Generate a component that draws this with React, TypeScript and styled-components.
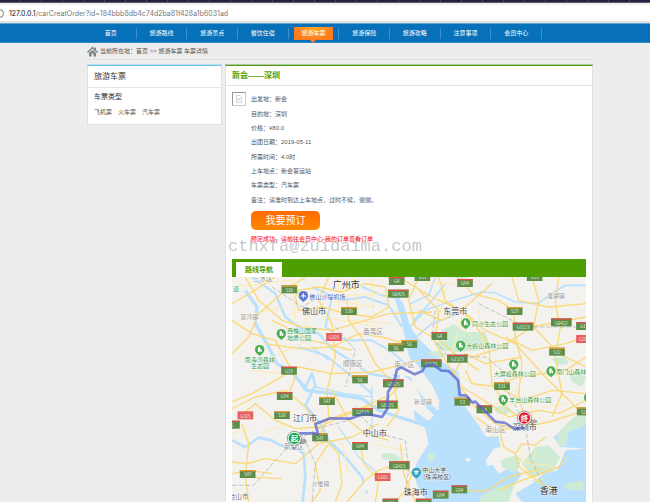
import React from "react";
import styled, { createGlobalStyle } from "styled-components";

const sans = `"Liberation Sans", "Noto Sans CJK SC", sans-serif`;

const GlobalStyle = createGlobalStyle`
  * { box-sizing: border-box; }
  html { background: #ededed; overflow: hidden; }
  body { margin: 0; font: 6px/14px ${sans}; color: #555; }
  a { color: inherit; text-decoration: none; }
  h1, h2, h3, p, ul { margin: 0; padding: 0; }
  ul { list-style: none; }
`;

/* Browser chrome */
const TabStrip = styled.div`
  height: 3px;
  background: repeating-linear-gradient(90deg, #23213f 0 20px, #4a4963 20px 21px);
  border-bottom: 1px solid #5c5b70;
`;
const AddressBar = styled.div`
  display: flex;
  align-items: center;
  height: 20px;
  padding-top: 1px;
  background: #fff;
  border-bottom: 2px solid #e4e4e4;
  border-top: 2px solid #f0f0f0;
`;
const InfoIcon = styled.svg`
  width: 9px;
  height: 9px;
  margin-left: -5px;
  flex: none;
`;
const AddressInput = styled.input`
  flex: 1;
  min-width: 0;
  padding: 0;
  border: 0;
  outline: 0;
  background: none;
  font: 7px/14px Inter, sans-serif;
  color: #777;
`;
const AddressHost = styled.label`
  margin-left: 5px;
  font: 7px/14px Inter, sans-serif;
  color: #111;
`;

/* Navigation */
const Nav = styled.nav`
  height: 20px;
  padding: 0 108px 0 86px;
  background: #0670b8;
  border-top: 1px solid #5fa3d0;
  border-bottom: 1px solid #2c8acb;
`;
const NavList = styled.ul`
  display: grid;
  grid-template-columns: repeat(9, 1fr);
  align-items: center;
  height: 18px;
`;
const NavItem = styled.li`
  display: flex;
  justify-content: center;
  border-right: 1px solid #3c90cb;
  line-height: 11px;
`;
const NavLink = styled.a<{ $active?: boolean }>`
  position: relative;
  padding: 0 7px;
  line-height: 13px;
  margin: -1px 0;
  color: #fff;
  white-space: nowrap;
  background: ${(p) => (p.$active ? "radial-gradient(ellipse at 50% 0, #ffab1c, #ff7a1f 75%)" : "none")};
  &::after {
    content: "";
    display: ${(p) => (p.$active ? "block" : "none")};
    position: absolute;
    left: 50%;
    top: 100%;
    margin-left: -3px;
    border: 3px solid transparent;
    border-top-color: #ff7a1f;
    border-bottom: 0;
  }
`;

/* Page */
const Page = styled.main`
  margin: 0 57px 0 87px;
`;
const Breadcrumb = styled.div`
  display: flex;
  align-items: center;
  gap: 2px;
  height: 17px;
  margin-bottom: 5px;
  border-bottom: 1px solid #e2e2e2;
`;
const HomeIcon = styled.svg`
  width: 11px;
  height: 11px;
`;
const Columns = styled.div`
  display: flex;
  align-items: flex-start;
  gap: 3px;
`;
const Panel = styled.section<{ $accent: string }>`
  background: #fff;
  border: 1px solid #e0e0e0;
  border-top: 1px solid ${(p) => p.$accent};
  box-shadow: 0 -1px 0 ${(p) => p.$accent}66;
`;
const Sidebar = styled(Panel)`
  flex: 0 0 135px;
  min-height: 60px;
`;
const Content = styled(Panel)`
  flex: 1;
  min-width: 0;
  position: relative;
`;
const SideTitle = styled.h2`
  padding: 0 6px;
  font-size: 8px;
  font-weight: 400;
  line-height: 21px;
  color: #333;
  border-bottom: 1px solid #e4e4e4;
`;
const SideHeading = styled.h3`
  padding: 2px 6px 0;
  font-size: 7px;
  font-weight: 400;
  line-height: 14px;
  color: #333;
`;
const TypeList = styled.ul`
  display: flex;
  gap: 6px;
  padding: 1px 6px 0;
`;
const Title = styled.h1`
  padding: 0 6px;
  font-size: 8px;
  line-height: 19px;
  color: #4f9e05;
  border-bottom: 1px solid #e4e4e4;
`;
const Detail = styled.div`
  display: flex;
  align-items: flex-start;
  gap: 5px;
  padding: 6px 6px 0;
`;
const MissingImage = styled.span`
  display: flex;
  align-items: center;
  justify-content: center;
  width: 14px;
  height: 14px;
  border: 1px solid;
  border-color: #999 #ccc #ccc #999;
`;
const Facts = styled.ul`
  display: grid;
  grid-auto-rows: 1fr;
  align-items: center;
  height: 115px;
`;
const BookButton = styled.button`
  display: block;
  width: 69px;
  height: 19px;
  margin: 4px 0 2px;
  padding: 0;
  border: 0;
  border-radius: 5px;
  background: linear-gradient(#ff6a00, #ff8a00);
  color: #fff;
  font: 10px/19px ${sans};
`;
const Notice = styled.p`
  color: #f00;
  line-height: 14px;
`;
const Watermark = styled.span`
  position: absolute;
  left: 2px;
  top: 171px;
  font: 17px/20px "Liberation Mono", monospace;
  color: rgba(130, 130, 130, 0.45);
  pointer-events: none;
`;
const RouteSection = styled.section`
  margin: 13px 6px 0;
`;
const RouteBar = styled.div`
  display: flex;
  align-items: flex-end;
  height: 18px;
  padding-left: 4px;
  background: #4f9e00;
`;
const RouteTab = styled.h2`
  padding: 0 9px;
  background: #fff;
  color: #4f9e00;
  font-size: 7px;
  line-height: 15px;
`;
const MapCanvas = styled.svg`
  display: block;
  width: 100%;
  height: auto;
  background: #f4f2ef;
  font-family: "Noto Sans CJK SC", sans-serif;
`;

const navItems = ["首页", "旅游路线", "旅游景点", "餐饮住宿", "旅游车票", "旅游保险", "旅游攻略", "注意事项", "会员中心"];
const facts = [
  "出发地：新会",
  "目的地：深圳",
  "价格：¥80.0",
  "出团日期：2019-05-11",
  "所需时间：4.0时",
  "上车地点：新会客运站",
  "车票类型：汽车票",
  "备注：请准时到达上车地点，过时不候，谢谢。",
];

const sea = [
  "M487 60 L512 75 535 150 560 185 640 262 680 285 690 350 700 390 740 445 762 480 800 478 806 510 780 560 800 590 835 570 870 590 850 620 800 640 745 675 590 675 560 640 545 590 555 555 590 500 580 455 548 425 545 400 590 432 606 415 575 385 560 350 500 318 480 290 540 300 580 345 622 400 608 345 560 290 530 235 508 130Z",
  "M850 650 L900 620 935 590 975 580 990 545 1000 520 1062 515 1062 675 870 675Z",
  "M965 480 L990 462 1030 440 1062 420 1062 515 1020 512 985 510Z",
];
const rivers = [
  { w: 10, d: "M40 40 L75 90 70 140 105 200 135 260 180 285 225 340 300 350 390 365 440 400 500 420 580 445" },
  { w: 7, d: "M60 0 L130 50 160 120 200 150 260 170 300 215 370 260 410 290 470 300 540 345 570 380" },
  { w: 8, d: "M215 340 L240 290 250 325 220 385 265 440 290 490 340 540 390 600 405 650" },
  { w: 8, d: "M187 510 L215 530 220 600 212 675 M0 490 L40 510 80 482 120 490 145 505 180 515" },
  { w: 6, d: "M240 30 L330 70 400 60 470 85 510 150 M390 30 L450 55 505 65" },
  { w: 6, d: "M300 60 L280 150 340 190 420 190 480 225 520 260 M200 210 L280 235 350 290 420 350" },
  { w: 5, d: "M530 155 L580 100 650 75 700 60 750 45 790 48 850 75 920 80 950 55 1000 25 1062 25" },
  { w: 5, d: "M540 190 L600 140 680 110 M535 80 L590 55 610 0 M545 130 L600 70 640 20" },
  { w: 4, d: "M240 210 L290 250 M250 330 L340 350 420 360 M420 330 L420 480 M320 450 L380 540 450 600" },
];
const islands = [
  "M520 240 L550 255 600 325 622 370 618 402 575 360 545 325Z",
  "M505 290 L545 315 580 390 595 425 555 385 530 345 500 325Z",
  "M762 550 L785 515 805 510 790 560 765 568Z",
  "M398 610 L412 628 405 645 390 632Z",
  "M700 548 a8 6 0 1 0 16 0 a8 6 0 1 0 -16 0",
];
const greens = [
  "M630 160 L665 140 700 165 760 165 770 195 740 220 680 225 625 220 605 200 640 190Z",
  "M585 225 L620 222 645 235 620 245Z",
  "M785 390 L820 385 840 400 820 412 795 410Z",
  "M960 245 L1000 240 1010 260 975 265Z",
  "M1010 290 L1040 280 1062 300 1050 330 1020 315Z",
  "M448 530 L480 528 510 545 495 555 450 545Z",
  "M585 530 L608 530 608 548 590 555Z",
  "M805 550 L850 535 870 545 850 590 810 570Z",
  "M910 510 L950 505 985 540 960 585 900 600 870 560Z",
  "M980 465 L1020 425 1062 400 1062 445 1010 465 1000 510 975 500Z",
  "M750 655 L800 630 850 615 830 675 740 675Z",
  "M900 610 L940 600 920 625Z",
  "M990 625 L1050 610 1062 640 1010 640Z",
  "M665 0 L710 0 685 12Z",
];
const roads = [
  "M0 80 L60 45 130 0 M0 230 L50 180 80 110 160 40 220 0",
  "M0 375 L60 350 130 310 200 270 300 290 420 285 560 250",
  "M40 0 L80 70 150 130 210 150 300 160 400 130 470 110 600 105",
  "M290 0 L260 70 300 140 310 240 285 340 290 420 250 500",
  "M345 60 L350 130 395 190 430 260 485 320 500 400 465 450",
  "M200 40 L260 30 330 45 400 20 460 30 470 90 420 120 340 110 270 90 200 100 190 60Z",
  "M0 395 L70 360 160 340 220 390 250 440 370 400 450 380 500 330",
  "M20 420 L70 380 130 430 190 455 260 450 350 410 460 360",
  "M0 555 L45 560 100 545 190 560 260 500 360 480 440 440",
  "M50 675 L40 600 50 500 30 440 M0 590 L50 580 120 590 M48 600 L150 605",
  "M240 675 L265 640 250 560 290 500 320 530 330 620 310 675",
  "M345 675 L400 610 440 580 500 560 540 590 520 640 490 675",
  "M385 500 L395 560 440 610 430 675 M300 340 L350 430 400 470 470 490",
  "M560 0 L530 70 550 150 600 180 640 250 700 350 730 390 790 440 850 455",
  "M500 0 L600 60 690 100 760 160 850 200 940 300 1062 420",
  "M620 0 L640 70 710 120 770 200 780 320 830 400 900 440",
  "M560 100 L630 130 700 90 780 20 M560 40 L620 100 610 180 680 240 740 280",
  "M680 0 L720 50 800 70 845 100 850 180 870 260 860 350 880 440",
  "M720 240 L800 215 900 150 1062 120 M780 330 L860 300 1000 280 1062 240",
  "M840 0 L860 70 950 90 1062 80 M900 0 L920 70 905 150 980 230 1062 270",
  "M980 0 L970 80 985 150 970 240 990 350 960 420",
  "M700 280 L720 320 800 330 870 370 960 340 1062 350",
  "M690 330 L740 360 830 420 920 400 980 410 1062 370 M730 420 L790 460 880 450 950 435 1062 400",
  "M805 470 L815 510 850 530 870 500 910 505 940 480 M800 640 L870 610 980 570 1000 540",
  "M640 650 L700 640 760 643 830 600 930 575 M850 530 L860 570 930 620 960 640",
  "M505 500 L515 590 550 675 M0 130 L60 170 130 190 190 300 170 350",
  "M100 200 L200 215 300 210 380 170 450 180 520 200 M120 130 L240 190 360 220",
  "M1062 180 L1000 200 900 220 820 180 M660 300 L700 230 760 260 870 240",
];
const lanes = [
  "M0 30 L180 10 M30 120 L150 90 M120 240 L230 190 M180 0 L190 150 M215 90 L240 200 M300 70 L430 90",
  "M320 0 L320 110 M360 0 L380 100 M420 0 L425 110 M250 60 L450 50 M270 120 L440 150 M350 130 L480 140",
  "M580 20 L700 20 M600 60 L720 180 M640 30 L620 130 M690 120 L660 230 M740 100 L760 240",
  "M0 470 L60 450 M90 470 L160 440 M60 280 L150 290 M330 500 L350 590 M420 500 L520 520",
  "M760 380 L890 380 M800 350 L820 470 M840 330 L930 430 M900 350 L900 440 M930 390 L1000 380",
  "M850 550 L970 570 M870 520 L890 600 M910 520 L900 570 M740 440 L790 480 M670 290 L770 340",
];
const rails = [
  "M0 625 L65 625 130 550 190 490 270 450 350 430 370 390",
  "M215 480 L250 560 240 675",
  "M370 400 L440 470 520 490 530 580 520 640",
  "M610 100 L600 180 650 240 760 240 810 280 830 350 880 440",
  "M740 80 L880 150 1062 150",
  "M880 450 L895 540 930 620",
  "M120 30 L210 90 260 60 M310 150 L370 220 340 330",
];

type Shield = [x: number, y: number, text: string, kind?: "o" | "r" | "p"];
const shields: Shield[] = [
  [172, 37, "S16"], [351, 102, "S39"], [494, 12, "G4", "r"], [499, 50, "G0425", "r"], [571, 0, "G35", "r"],
  [699, 18, "G94", "r"], [908, 0, "G35"], [848, 102, "S29"], [873, 149, "G1523", "r"], [988, 136, "G0422", "r"],
  [1056, 147, "G15", "r"], [306, 180, "G105", "p"], [532, 201, "S6"], [492, 211, "S6"], [622, 177, "G4", "r"],
  [676, 245, "G1523", "r"], [975, 224, "S22"], [1056, 186, "G205", "p"], [171, 281, "G15", "r"], [384, 307, "S6"],
  [598, 259, "G1501", "r"], [484, 319, "G0425", "r"], [466, 383, "G0425", "r"], [392, 405, "G2518", "r"],
  [158, 357, "G94", "r"], [285, 372, "S47"], [150, 414, "S26"], [40, 415, "G325", "p"], [0, 443, "S", "r"],
  [264, 481, "S47"], [384, 507, "G94", "r"], [502, 565, "G0425", "r"], [452, 600, "G105", "p"], [47, 591, "S49"],
  [691, 374, "S3"], [757, 397, "G4", "r"], [810, 327, "S31"], [626, 653, "G94", "r"], [682, 637, "G94", "r"],
  [1058, 403, "S28"], [475, 677, "G94", "r"], [575, 677, "G94", "r"],
];
type Label = [x: number, y: number, text: string, size: number, color: string];
const city = "#444";
const district = "#999";
const park = "#3f9a46";
const labels: Label[] = [
  [343, 33, "广州市", 27, "#333"], [246, 111, "佛山市", 24, city], [670, 111, "东莞市", 24, city],
  [219, 433, "江门市", 24, city], [428, 477, "中山市", 24, city], [551, 655, "珠海市", 24, city],
  [878, 459, "深圳市", 24, city], [950, 652, "香港", 27, "#333"], [20, 667, "台山市", 20, "#777"],
  [423, 170, "番禺区", 20, district], [362, 267, "顺德区", 20, district], [517, 269, "南沙区", 20, district],
  [790, 464, "南山区", 20, district], [186, 517, "新会区", 20, district], [93, 12, "三水区", 20, district],
  [52, 125, "富湾镇", 18, district], [971, 64, "潼湖镇", 18, district], [573, 381, "新垦镇", 18, district],
  [265, 628, "沙堆镇", 18, district], [12, 42, "道", 18, park],
  [286, 65, "佛山沙堤机场", 18, "#4668cc"], [210, 169, "西樵山国家", 18, park], [201, 188, "地质公园", 18, park],
  [83, 254, "南海湾森林", 18, park], [84, 273, "生态园", 18, park], [774, 147, "同沙生态公园", 18, park],
  [766, 214, "大岭山森林公园", 18, park], [848, 298, "大屏嶂森林公园", 18, park],
  [1027, 292, "南门山森林公", 18, park], [895, 376, "羊台山森林公园", 18, park],
  [607, 584, "中山大学", 18, "#555"], [616, 605, "(珠海校区)", 18, "#555"],
];
type Pin = [x: number, y: number, color: string, kind: "tree" | "plane" | "school"];
const pins: Pin[] = [
  [214, 56, "#5876d6", "plane"], [148, 170, "#4bae54", "tree"], [83, 218, "#4bae54", "tree"],
  [701, 138, "#4bae54", "tree"], [686, 205, "#4bae54", "tree"], [845, 262, "#4bae54", "tree"],
  [957, 282, "#4bae54", "tree"], [814, 367, "#4bae54", "tree"], [1070, 362, "#4bae54", "tree"],
  [553, 586, "#35a4c4", "school"],
];
const glyphs = {
  tree: "M-5 7 V-6 L-1 -9 2 -6 V-1 H6 V7 H2 V2 H0 V7Z",
  plane: "M-1 -8 H1 L2 -2 8 1 V3 L2 2 1 6 3 8 H-3 L-1 6 -2 2 -8 3 V1 L-2 -2Z",
  school: "M-9 -2 L0 -6 9 -2 0 2Z M-5 2 L0 4 5 2 V5 L0 7 -5 5Z",
};

function RouteMap() {
  return (
    <MapCanvas viewBox="0 0 1062 675" role="img" aria-label="新会到深圳路线">
      <g fill="#b9e0fc">{sea.map((d) => <path key={d} d={d} />)}</g>
      <g fill="none" stroke="#b9e0fc" strokeLinejoin="round">
        {rivers.map((r) => <path key={r.d} d={r.d} strokeWidth={r.w} />)}
      </g>
      <g fill="#f4f2ef">{islands.map((d) => <path key={d} d={d} />)}</g>
      <g fill="#cdebd5">{greens.map((d) => <path key={d} d={d} />)}</g>
      <g fill="none" stroke="#fdebb0" strokeWidth="3">{lanes.map((d) => <path key={d} d={d} />)}</g>
      <g fill="none" stroke="#fbd978" strokeWidth="4" strokeLinejoin="round">
        {roads.map((d) => <path key={d} d={d} />)}
      </g>
      <g fill="none" stroke="#aaa" strokeWidth="2" strokeDasharray="14 6">
        {rails.map((d) => <path key={d} d={d} />)}
      </g>
      {labels.map(([x, y, text, size, color]) => (
        <text key={text} x={x} y={y} fontSize={size} fill={color} textAnchor="middle"
          stroke="#fff" strokeOpacity="0.7" strokeWidth="3" paintOrder="stroke">{text}</text>
      ))}
      {shields.map(([x, y, text, kind = "o"]) => {
        const w = text.length > 4 ? 62 : 47;
        return (
          <g key={`${x}-${y}`}>
            <rect x={x - w / 2} y={y - 12} width={w} height="24" fill={kind === "p" ? "#e8605d" : "#5d8f4b"} />
            {kind !== "p" && <rect x={x - w / 2} y={y - 12} width={w} height="4" fill={kind === "r" ? "#e0504d" : "#e89a35"} />}
            <text x={x} y={y + 7} fontSize="13" fill="#e9f2e4" textAnchor="middle">{text}</text>
          </g>
        );
      })}
      {pins.map(([x, y, color, kind]) => (
        <g key={`${x}-${y}`} transform={`translate(${x} ${y})`}>
          <path d="M-10 10 L0 19 10 10Z" fill={color} />
          <circle r="14" fill={color} />
          <path d={glyphs[kind]} fill="#fff" />
        </g>
      ))}
      <path
        d="M186 512 L188 480 205 469 248 469 258 470 250 441 295 424 355 425 400 409 450 420 466 395 468 345 485 318 495 278 508 271 548 292 570 283 580 267 602 262 628 281 650 282 678 310 683 354 703 356 720 376 730 374 790 434 820 438 848 456 874 451"
        fill="none" stroke="#4b5bd0" strokeOpacity="0.7" strokeWidth="8" strokeLinejoin="round" strokeLinecap="round" />
      <ellipse cx="210" cy="493" rx="14" ry="8" fill="#000" opacity="0.3" />
      <ellipse cx="900" cy="433" rx="16" ry="6" fill="#000" opacity="0.3" />
      {[{ x: 187, y: 484, c: "#12a84b", t: "起" }, { x: 877, y: 423, c: "#e0192d", t: "终" }].map((m) => (
        <g key={m.t}>
          <path d={`M${m.x - 12} ${m.y + 16} L${m.x} ${m.y + 30} ${m.x + 12} ${m.y + 16}Z`} fill="#fff" stroke="#666" strokeWidth="2" />
          <circle cx={m.x} cy={m.y} r="21" fill="#fff" stroke="#666" strokeWidth="2" />
          <circle cx={m.x} cy={m.y} r="17" fill={m.c} />
          <text x={m.x} y={m.y + 8} fontSize="22" fontWeight="700" fill="#fff" textAnchor="middle">{m.t}</text>
        </g>
      ))}
    </MapCanvas>
  );
}

export default function App() {
  return (
    <>
      <GlobalStyle />
      <header>
        <TabStrip />
        <AddressBar>
          <InfoIcon viewBox="0 0 18 18" aria-hidden="true">
            <circle cx="9" cy="9" r="8" fill="none" stroke="#777" strokeWidth="2" />
            <path d="M9 8 V14 M9 4 V6" stroke="#777" strokeWidth="2" />
          </InfoIcon>
          <AddressHost htmlFor="address">127.0.0.1</AddressHost>
          <AddressInput id="address" type="text" defaultValue="/carCreatOrder?id=184bbb8db4c74d2ba81f428a1b6031ad" />
        </AddressBar>
        <Nav>
          <NavList>
            {navItems.map((name) => (
              <NavItem key={name}>
                <NavLink href="#" $active={name === "旅游车票"}>{name}</NavLink>
              </NavItem>
            ))}
          </NavList>
        </Nav>
      </header>
      <Page>
        <Breadcrumb>
          <HomeIcon viewBox="0 0 22 22" aria-hidden="true">
            <path d="M11 1 L15 5 V3 H18 V8 L22 12 20 14 11 5 2 14 0 12Z" fill="#7d8580" />
            <path d="M4 14 L11 8 18 14 V21 H13 V15 H9 V21 H4Z" fill="#7d8580" />
          </HomeIcon>
          <span>当前所在地：<a href="#">首页</a> &gt;&gt; <a href="#">旅游车票</a> <a href="#">车票详情</a></span>
        </Breadcrumb>
        <Columns>
          <Sidebar as="aside" $accent="#6cc5ee">
            <SideTitle>旅游车票</SideTitle>
            <SideHeading>车票类型</SideHeading>
            <TypeList>
              {["飞机票", "火车票", "汽车票"].map((t) => <li key={t}><a href="#">{t}</a></li>)}
            </TypeList>
          </Sidebar>
          <Content $accent="#4d9a1c">
            <Title>新会——深圳</Title>
            <Detail>
              <MissingImage role="img" aria-label="车票图片">
                <svg width="6" height="8" viewBox="0 0 12 16" aria-hidden="true">
                  <path d="M1 1 H8 L11 4 V15 H1Z M3 12 L9 6 M4 6 L8 11" fill="none" stroke="#aaa" strokeWidth="1" />
                </svg>
              </MissingImage>
              <div>
                <Facts>{facts.map((f) => <li key={f}>{f}</li>)}</Facts>
                <BookButton type="button">我要预订</BookButton>
                <Notice>预定成功，请前往会员中心-我的订单查看订单</Notice>
              </div>
            </Detail>
            <RouteSection>
              <RouteBar><RouteTab>路线导航</RouteTab></RouteBar>
              <RouteMap />
            </RouteSection>
            <Watermark>cthxfa@zuidaima.com</Watermark>
          </Content>
        </Columns>
      </Page>
    </>
  );
}
